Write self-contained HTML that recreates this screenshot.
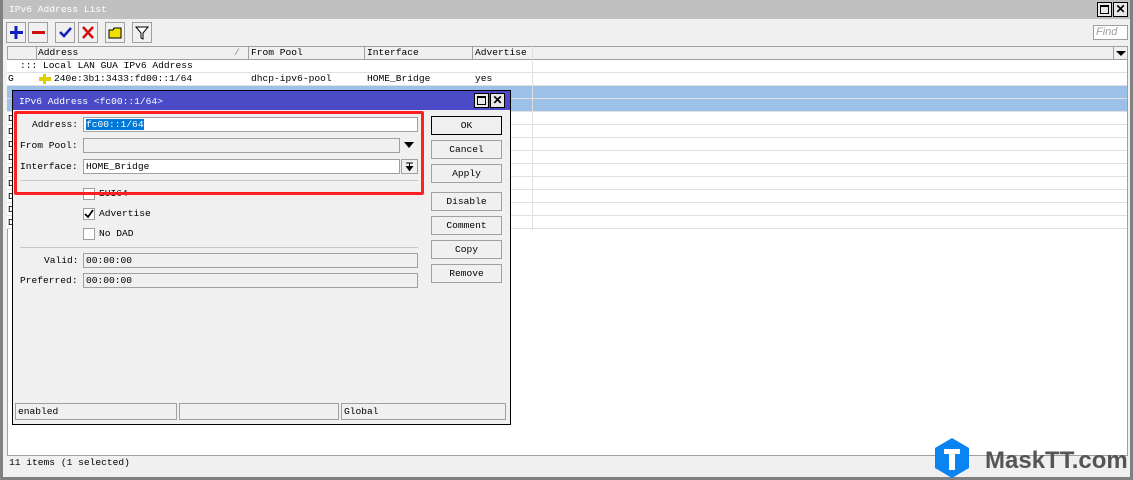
<!DOCTYPE html>
<html><head><style>
*{margin:0;padding:0;box-sizing:border-box}
body{width:1133px;height:480px;background:#f0f0f0;position:relative;overflow:hidden;font-family:"Liberation Mono",monospace;font-size:9.6px;color:#000}
.a{position:absolute}
.t{position:absolute;white-space:nowrap;line-height:12px}
.inp{position:absolute;background:#fff;border:1px solid #a0a0a0;height:15px;padding-left:2px;line-height:13px}
.dis{background:#f0f0f0}
.btn{position:absolute;left:431px;width:71px;height:19px;border:1px solid #a0a0a0;background:#f0f0f0;text-align:center;line-height:17px}
.cb{position:absolute;left:83px;width:12px;height:12px;border:1px solid #a0a0a0;background:#fff}
.tb{position:absolute;top:22px;width:20px;height:21px;border:1px solid #a0a0a0;background:#f0f0f0}
.row{position:absolute;left:7px;width:1120px;height:13px;border-bottom:1px solid #e0e0e0;background:#fff}
</style></head><body>
<div class="a" style="left:0;top:0;width:1133px;height:480px;border:3px solid #808080;border-top:none"></div>
<div class="a" style="left:3px;top:0;width:1127px;height:19px;background:#c0c0c0"></div>
<div class="t" style="left:9px;top:4px;color:#fff">IPv6 Address List</div>
<div class="a" style="left:1097px;top:2px;width:15px;height:15px;border:1px solid #000;background:#e8e8e8"><div class="a" style="left:2px;top:2px;width:9px;height:9px;border:1px solid #000;border-top-width:2px"></div></div>
<div class="a" style="left:1113px;top:2px;width:15px;height:15px;border:1px solid #000;background:#e8e8e8;font:bold 12px 'Liberation Sans';text-align:center;line-height:13px">✕</div>
<div class="tb" style="left:6px"><svg width="18" height="19"><path d="M9 3v13M3 9.5h13" stroke="#1020c0" stroke-width="3"/></svg></div>
<div class="tb" style="left:28px"><svg width="18" height="19"><path d="M3 9.5h13" stroke="#d01010" stroke-width="3"/></svg></div>
<div class="tb" style="left:55px"><svg width="18" height="19"><path d="M4 9l4 4 7-8" stroke="#1020c0" stroke-width="2.5" fill="none"/></svg></div>
<div class="tb" style="left:78px"><svg width="18" height="19"><path d="M4 4l10 11M14 4L4 15" stroke="#d01010" stroke-width="2.5"/></svg></div>
<div class="tb" style="left:105px"><svg width="18" height="19"><path d="M3 7h4l1-2h7v10H3z" fill="#f0e000" stroke="#000"/></svg></div>
<div class="tb" style="left:132px"><svg width="18" height="19"><path d="M3 4h12l-5 6v6l-2-1v-5z" fill="#fff" stroke="#000"/></svg></div>
<div class="a" style="left:1093px;top:25px;width:35px;height:15px;border:1px solid #a0a0a0;background:#fff;font:italic 11px 'Liberation Sans';color:#a0a0a0;padding-left:2px;line-height:13px">Find</div>
<div class="a" style="left:7px;top:46px;width:1121px;height:410px;background:#fff;border:1px solid #a0a0a0"></div>
<div class="a" style="left:7px;top:46px;width:1121px;height:14px;background:#f0f0f0;border:1px solid #a0a0a0"></div>
<div class="a" style="left:36px;top:46px;height:14px;border-left:1px solid #a0a0a0"></div>
<div class="a" style="left:248px;top:46px;height:14px;border-left:1px solid #a0a0a0"></div>
<div class="a" style="left:364px;top:46px;height:14px;border-left:1px solid #a0a0a0"></div>
<div class="a" style="left:472px;top:46px;height:14px;border-left:1px solid #a0a0a0"></div>
<div class="a" style="left:532px;top:46px;height:184px;border-left:1px solid #e0e0e0"></div>
<div class="a" style="left:1113px;top:46px;height:14px;border-left:1px solid #a0a0a0"></div>
<div class="t" style="left:38px;top:47px">Address</div>
<div class="t" style="left:234px;top:47px;color:#888">/</div>
<div class="t" style="left:251px;top:47px">From Pool</div>
<div class="t" style="left:367px;top:47px">Interface</div>
<div class="t" style="left:475px;top:47px">Advertise</div>
<div class="a" style="left:1116px;top:51px;border:5px solid transparent;border-top:5px solid #000"></div>
<div class="row" style="top:60px"></div>
<div class="t" style="left:20px;top:60px">::: Local LAN GUA IPv6 Address</div>
<div class="row" style="top:73px"></div>
<div class="t" style="left:8px;top:73px">G</div>
<div class="a" style="left:39px;top:77px;width:12px;height:4px;background:#e0d000"></div>
<div class="a" style="left:43px;top:74px;width:3px;height:10px;background:#e0d000"></div>
<div class="t" style="left:54px;top:73px">240e:3b1:3433:fd00::1/64</div>
<div class="t" style="left:251px;top:73px">dhcp-ipv6-pool</div>
<div class="t" style="left:367px;top:73px">HOME_Bridge</div>
<div class="t" style="left:475px;top:73px">yes</div>
<div class="row" style="top:86px;background:#9cc0e8"></div>
<div class="row" style="top:99px;background:#9cc0e8"></div>
<div class="row" style="top:112px"></div><div class="row" style="top:125px"></div><div class="row" style="top:138px"></div><div class="row" style="top:151px"></div><div class="row" style="top:164px"></div><div class="row" style="top:177px"></div><div class="row" style="top:190px"></div><div class="row" style="top:203px"></div><div class="row" style="top:216px"></div>
<div class="a" style="left:532px;top:60px;height:170px;border-left:1px solid #e0e0e0"></div>
<div class="t" style="left:8px;top:112px;line-height:13px">D<br>D<br>D<br>D<br>D<br>D<br>D<br>D<br>D</div>
<div class="a" style="left:7px;top:455px;width:1121px;height:17px;background:#f0f0f0;border-top:1px solid #a0a0a0"></div>
<div class="t" style="left:9px;top:457px">11 items (1 selected)</div>
<div class="a" style="left:12px;top:90px;width:499px;height:335px;background:#f0f0f0;border:1px solid #000"></div>
<div class="a" style="left:13px;top:91px;width:497px;height:19px;background:#4b4bc8"></div>
<div class="t" style="left:19px;top:96px;color:#fff">IPv6 Address &lt;fc00::1/64&gt;</div>
<div class="a" style="left:474px;top:93px;width:15px;height:15px;border:1px solid #000;background:#e8e8e8"><div class="a" style="left:2px;top:2px;width:9px;height:9px;border:1px solid #000;border-top-width:2px"></div></div>
<div class="a" style="left:490px;top:93px;width:15px;height:15px;border:1px solid #000;background:#e8e8e8;font:bold 12px 'Liberation Sans';text-align:center;line-height:13px">✕</div>
<div class="t" style="left:32px;top:119px">Address:</div>
<div class="inp" style="left:83px;top:117px;width:335px"><span style="background:#0078d7;color:#fff">fc00::1/64</span></div>
<div class="t" style="left:20px;top:140px">From Pool:</div>
<div class="inp dis" style="left:83px;top:138px;width:317px"></div>
<div class="a" style="left:404px;top:142px;border:5px solid transparent;border-top:6px solid #000"></div>
<div class="t" style="left:20px;top:161px">Interface:</div>
<div class="inp" style="left:83px;top:159px;width:317px">HOME_Bridge</div>
<div class="a" style="left:401px;top:159px;width:17px;height:15px;border:1px solid #a0a0a0;background:#f0f0f0"><svg width="15" height="13"><path d="M4 3h7M7.5 3v7M4.5 6.5l3 4 3-4z" stroke="#000" fill="#000"/></svg></div>
<div class="a" style="left:20px;top:180px;width:398px;border-top:1px solid #c8c8c8"></div>
<div class="cb" style="top:188px"></div><div class="t" style="left:99px;top:188px">EUI64</div>
<div class="cb" style="top:208px"><svg width="10" height="10"><path d="M1 5l3 3 5-7" stroke="#000" stroke-width="1.8" fill="none"/></svg></div><div class="t" style="left:99px;top:208px">Advertise</div>
<div class="cb" style="top:228px"></div><div class="t" style="left:99px;top:228px">No DAD</div>
<div class="a" style="left:20px;top:247px;width:398px;border-top:1px solid #c8c8c8"></div>
<div class="t" style="left:44px;top:255px">Valid:</div>
<div class="inp dis" style="left:83px;top:253px;width:335px">00:00:00</div>
<div class="t" style="left:20px;top:275px">Preferred:</div>
<div class="inp dis" style="left:83px;top:273px;width:335px">00:00:00</div>
<div class="a" style="left:14px;top:111px;width:410px;height:84px;border:3px solid #ff2020;border-radius:2px"></div>
<div class="btn" style="top:116px;border:1px solid #000">OK</div>
<div class="btn" style="top:140px">Cancel</div>
<div class="btn" style="top:164px">Apply</div>
<div class="btn" style="top:192px">Disable</div>
<div class="btn" style="top:216px">Comment</div>
<div class="btn" style="top:240px">Copy</div>
<div class="btn" style="top:264px">Remove</div>
<div class="inp dis" style="left:15px;top:403px;width:162px;height:17px;line-height:15px">enabled</div>
<div class="inp dis" style="left:179px;top:403px;width:160px;height:17px"></div>
<div class="inp dis" style="left:341px;top:403px;width:165px;height:17px;line-height:15px">Global</div>
<svg class="a" style="left:933px;top:437px" width="38" height="42"><path d="M19 1L36 11V31L19 41L2 31V11Z" fill="#0a84f0"/><path d="M11 12h16v5h-5v16h-6V17h-5z" fill="#fff"/></svg>
<div class="t" style="left:985px;top:448px;font:bold 24px 'Liberation Sans';color:#555;line-height:26px">MaskTT.com</div>
</body></html>
